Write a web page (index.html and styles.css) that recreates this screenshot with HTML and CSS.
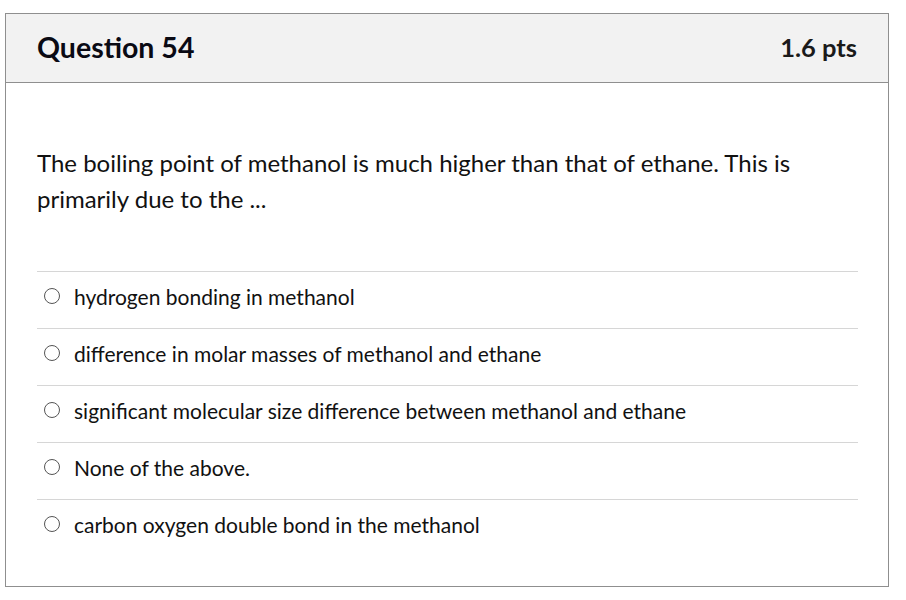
FILE: index.html
```html
<!DOCTYPE html>
<html>
<head>
<meta charset="utf-8">
<link rel="stylesheet" href="styles.css">
</head>
<body>
<div class="question">
  <div class="header">
    <h2 class="title">Question 54</h2>
    <div class="pts">1.6 pts</div>
  </div>
  <div class="content">
    <p class="text">The boiling point of methanol is much higher than that of ethane. This is primarily due to the ...</p>
    <ul class="answers">
      <li class="answer"><span class="radio"></span><span class="label">hydrogen bonding in methanol</span></li>
      <li class="answer"><span class="radio"></span><span class="label">difference in molar masses of methanol and ethane</span></li>
      <li class="answer"><span class="radio"></span><span class="label">significant molecular size difference between methanol and ethane</span></li>
      <li class="answer"><span class="radio"></span><span class="label">None of the above.</span></li>
      <li class="answer"><span class="radio"></span><span class="label">carbon oxygen double bond in the methanol</span></li>
    </ul>
  </div>
</div>
</body>
</html>
```
FILE: styles.css
```css
* { box-sizing: border-box; }
html, body { margin: 0; padding: 0; background: #fff; }
body { font-family: Lato, "Liberation Sans", sans-serif; color: #111; }
.question {
  margin: 13px 0 0 5px;
  width: 884px;
  height: 574px;
  border: 1px solid #8f8f8f;
}
.header {
  height: 69px;
  background: #f2f2f2;
  border-bottom: 1px solid #8f8f8f;
  padding: 0 31px 2px;
  display: flex;
  align-items: center;
  justify-content: space-between;
}
.title { margin: 0; font-size: 28.5px; font-weight: 700; color: #0a0a14; }
.pts { font-size: 25.5px; font-weight: 700; color: #1a1a1a; }
.content { padding: 0 30px 0 31px; }
.text {
  margin: 62px 0 0;
  font-size: 24px;
  line-height: 36px;
  color: #111;
}
.answers { list-style: none; margin: 54px 0 0; padding: 0; }
.answer {
  height: 57px;
  border-top: 1px solid #d6d6d6;
  display: flex;
  align-items: center;
  gap: 14px;
  padding: 0 0 8px 7px;
  font-size: 21px;
}
.radio {
  width: 16px; height: 16px;
  border: 1.5px solid #555;
  border-radius: 50%;
  flex: none;
}
.label { color: #111; }
```
